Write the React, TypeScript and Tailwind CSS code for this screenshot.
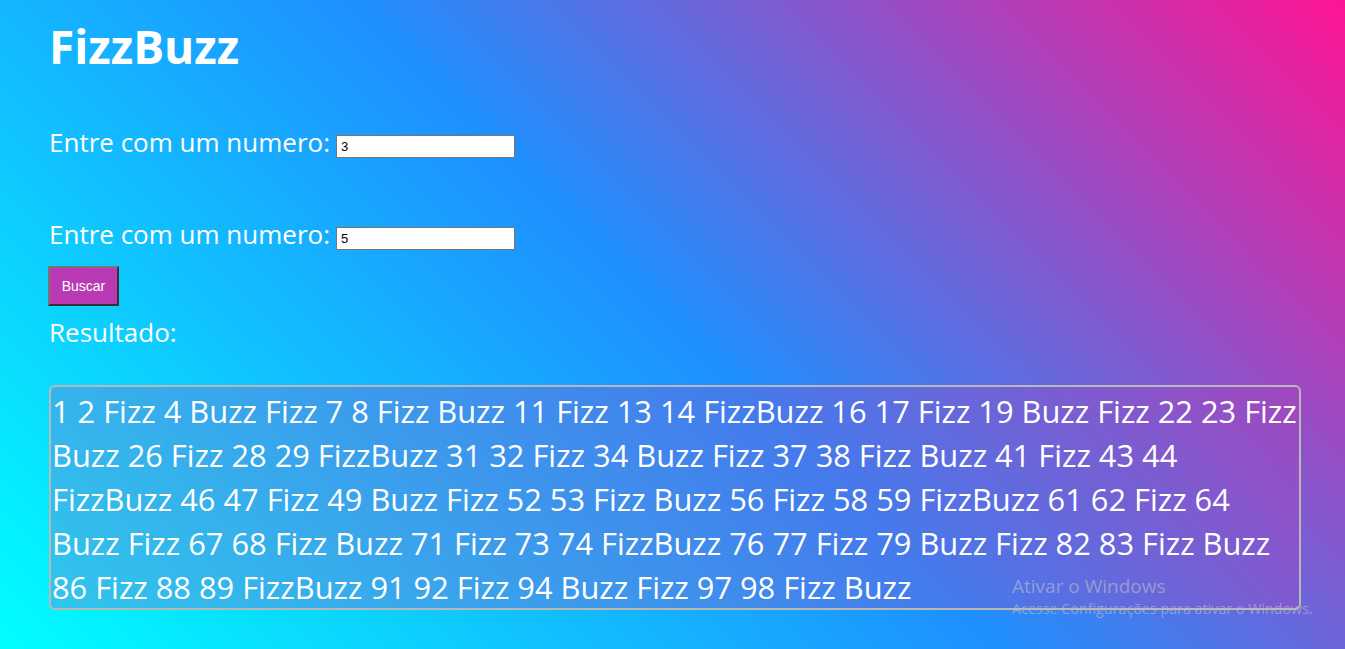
import React from "react";

const lines = [
  "1 2 Fizz 4 Buzz Fizz 7 8 Fizz Buzz 11 Fizz 13 14 FizzBuzz 16 17 Fizz 19 Buzz Fizz 22 23 Fizz",
  "Buzz 26 Fizz 28 29 FizzBuzz 31 32 Fizz 34 Buzz Fizz 37 38 Fizz Buzz 41 Fizz 43 44",
  "FizzBuzz 46 47 Fizz 49 Buzz Fizz 52 53 Fizz Buzz 56 Fizz 58 59 FizzBuzz 61 62 Fizz 64",
  "Buzz Fizz 67 68 Fizz Buzz 71 Fizz 73 74 FizzBuzz 76 77 Fizz 79 Buzz Fizz 82 83 Fizz Buzz",
  "86 Fizz 88 89 FizzBuzz 91 92 Fizz 94 Buzz Fizz 97 98 Fizz Buzz",
];

function Row({ value }: { value: string }) {
  return (
    <div className="flex items-start gap-[5px]">
      <label className="text-[26px] leading-[30px] text-white">Entre com um numero:</label>
      <input
        readOnly
        value={value}
        className="ml-[1px] mt-[8px] h-[23px] w-[179px] border border-[#767676] bg-white pl-[4px] font-['Liberation_Sans',Arial,sans-serif] text-[13px] text-black outline-none"
      />
    </div>
  );
}

export default function App() {
  return (
    <div className="relative min-h-screen w-full overflow-hidden bg-[linear-gradient(45deg,cyan,dodgerblue,deeppink)] font-['Open_Sans',sans-serif] text-white">
      <div className="flex flex-col items-start pl-[49px] pt-[18px]">
        <h1 className="text-[46px] font-bold leading-[56px]">FizzBuzz</h1>
        <div className="mt-[53px]">
          <Row value="3" />
        </div>
        <div className="mt-[61px]">
          <Row value="5" />
        </div>
        <button className="ml-[-1px] mt-[16px] h-[40px] w-[71px] border-2 border-b-[#333333] border-l-[#767676] border-r-[#333333] border-t-[#767676] bg-[#ba3ab5] font-['Liberation_Sans',Arial,sans-serif] text-[14px] text-white">
          Buscar
        </button>
        <div className="mt-[11px] text-[26px] leading-[30px]">Resultado:</div>
        <div className="mt-[38px] h-[225px] w-[1252px] rounded-[6px] border-2 border-[#b8b8b8] bg-[rgba(185,58,181,0.25)] pl-[1px] pt-[2px] text-[30.8px] leading-[44px]">
          {lines.map((l, i) => (
            <span key={i} className="block whitespace-nowrap">
              {l}
            </span>
          ))}
        </div>
      </div>
      <div className="pointer-events-none absolute left-[1012px] top-[574px] text-[rgba(190,190,200,0.6)]">
        <div className="text-[19px] leading-[25px]">Ativar o Windows</div>
        <div className="text-[14.3px] leading-[20px]">Acesse Configurações para ativar o Windows.</div>
      </div>
    </div>
  );
}
